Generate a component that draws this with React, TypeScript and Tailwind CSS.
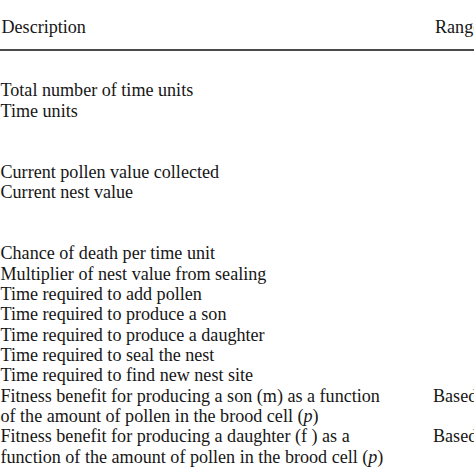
const serif = { fontFamily: '"Liberation Serif", "Times New Roman", serif' }

type Row = { text: React.ReactNode; range?: string } | null

const rows: Row[] = [
  { text: 'Total number of time units' },
  { text: 'Time units' },
  null,
  null,
  { text: 'Current pollen value collected' },
  { text: 'Current nest value' },
  null,
  null,
  { text: 'Chance of death per time unit' },
  { text: 'Multiplier of nest value from sealing' },
  { text: 'Time required to add pollen' },
  { text: 'Time required to produce a son' },
  { text: 'Time required to produce a daughter' },
  { text: 'Time required to seal the nest' },
  { text: 'Time required to find new nest site' },
  { text: 'Fitness benefit for producing a son (m) as a function', range: 'Based' },
  { text: <>of the amount of pollen in the brood cell (<i>p</i>)</> },
  { text: 'Fitness benefit for producing a daughter (f ) as a', range: 'Based' },
  { text: <>function of the amount of pollen in the brood cell (<i>p</i>)</> },
]

export default function App() {
  return (
    <div className="w-[474px] h-[474px] overflow-hidden bg-white text-[#161616]" style={serif}>
      <div className="pt-[17px] text-[18.1px] leading-[20.37px] whitespace-nowrap">
        <div className="grid grid-cols-[434px_1fr]">
          <div className="pl-[1.5px]">Description</div>
          <div className="pl-[1px]">Range</div>
        </div>
        <div className="mt-[11.5px] h-[2px] bg-[#4a4a4a]" />
        <div className="mt-[29.5px]">
          {rows.map((r, i) => (
            <div key={i} className="grid grid-cols-[433px_1fr] h-[20.37px]">
              <div className="pl-[0.5px]">{r ? r.text : ''}</div>
              <div>{r?.range ?? ''}</div>
            </div>
          ))}
        </div>
      </div>
    </div>
  )
}
